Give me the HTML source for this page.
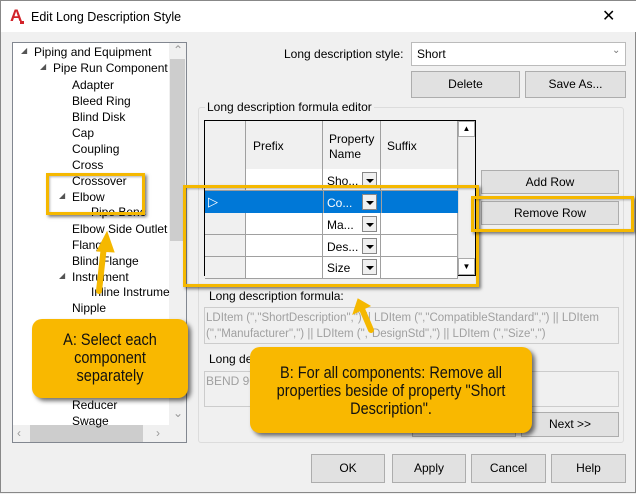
<!DOCTYPE html>
<html><head><style>
*{box-sizing:border-box;margin:0;padding:0}
body{width:636px;height:493px;background:#f0f0f0;font-family:"Liberation Sans",sans-serif;font-size:12px;color:#000;position:relative;overflow:hidden;border:1px solid #888}
.a{position:absolute}
.btn{position:absolute;background:#e1e1e1;border:1px solid #adadad;text-align:center;font-size:12px}
.t{position:absolute;white-space:nowrap;font-size:12px}
.cell{position:absolute;border-right:1px solid #a0a0a0;border-bottom:1px solid #a0a0a0;background:#fff}
.dd{position:absolute;width:15px;height:16px;border:1px solid #888;background:#f0f0f0}
.dd:after{content:"";position:absolute;left:3px;top:6px;border-left:4px solid transparent;border-right:4px solid transparent;border-top:4px solid #000}
.hl{position:absolute;border:3px solid #f5b800;box-shadow:2px 2px 3px rgba(0,0,0,.5), inset 1px 1px 2px rgba(0,0,0,.3)}
.call{position:absolute;background:#f9b800;border-radius:10px;box-shadow:3px 3px 4px rgba(0,0,0,.55);color:#111;font-size:16.5px;line-height:18px}
.call span{position:absolute;left:-60px;right:-60px;white-space:nowrap;text-align:center;transform:scaleX(0.88)}
</style></head><body>
<div class="a" style="left:0;top:0;width:636px;height:31px;background:#fff"></div>
<div class="t" style="left:9px;top:5px;font-size:17px;font-weight:bold;color:#d2232a">A</div>
<div class="a" style="left:19px;top:20px;width:4px;height:3px;background:#d2232a"></div>
<div class="t" style="left:30px;top:9px;font-size:12.5px">Edit Long Description Style</div>
<div class="t" style="left:601px;top:5px;font-size:16px;font-weight:300">✕</div>

<div class="a" style="left:11px;top:41px;width:175px;height:401px;background:#fff;border:1px solid #828790"></div>
<div class="a" style="left:168px;top:42px;width:17px;height:382px;background:#f0f0f0"></div>
<div class="a" style="left:169px;top:58px;width:15px;height:182px;background:#cdcdcd"></div>
<div class="t" style="left:172px;top:42px;color:#999">⌃</div>
<div class="t" style="left:172px;top:405px;color:#999">⌄</div>
<div class="a" style="left:12px;top:424px;width:173px;height:17px;background:#f0f0f0"></div>
<div class="a" style="left:29px;top:424px;width:113px;height:17px;background:#cdcdcd"></div>
<div class="t" style="left:16px;top:425px;color:#999">‹</div>
<div class="t" style="left:155px;top:425px;color:#999">›</div>
<div class="t" style="left:20px;top:45px;font-size:8px;color:#555">◢</div>
<div class="t" style="left:33px;top:44px">Piping and Equipment</div>
<div class="t" style="left:39px;top:61px;font-size:8px;color:#555">◢</div>
<div class="t" style="left:52px;top:60px">Pipe Run Component</div>
<div class="t" style="left:71px;top:76px;line-height:16px">Adapter<br>Bleed Ring<br>Blind Disk<br>Cap<br>Coupling<br>Cross<br>Crossover<br>Elbow</div>
<div class="t" style="left:58px;top:190px;font-size:8px;color:#555">◢</div>
<div class="t" style="left:90px;top:204px">Pipe Benc</div>
<div class="t" style="left:71px;top:220px;line-height:16px">Elbow Side Outlet<br>Flange<br>Blind Flange<br>Instrument</div>
<div class="t" style="left:58px;top:270px;font-size:8px;color:#555">◢</div>
<div class="t" style="left:90px;top:284px">Inline Instrume</div>
<div class="t" style="left:71px;top:300px">Nipple</div>
<div class="t" style="left:71px;top:396px;line-height:16px">Reducer<br>Swage</div>

<div class="t" style="left:283px;top:46px">Long description style:</div>
<div class="a" style="left:410px;top:41px;width:215px;height:24px;background:#fff;border:1px solid #bbb"></div>
<div class="t" style="left:416px;top:46px">Short</div>
<div class="t" style="left:611px;top:44px;font-size:10px;color:#777">⌄</div>
<div class="btn" style="left:410px;top:70px;width:109px;height:27px;line-height:25px">Delete</div>
<div class="btn" style="left:524px;top:70px;width:101px;height:27px;line-height:25px">Save As...</div>

<div class="a" style="left:197px;top:106px;width:426px;height:336px;border:1px solid #dcdcdc;border-radius:3px"></div>
<div class="t" style="left:204px;top:99px;background:#f0f0f0;padding:0 2px">Long description formula editor</div>

<div class="a" style="left:203px;top:119px;width:272px;height:156px;border:1px solid #000;background:#fff;overflow:hidden">
 <div class="cell" style="left:0;top:0;width:41px;height:49px;background:#f0f0f0"></div>
 <div class="cell" style="left:41px;top:0;width:77px;height:49px;background:#f0f0f0"></div>
 <div class="cell" style="left:118px;top:0;width:58px;height:49px;background:#f0f0f0"></div>
 <div class="cell" style="left:176px;top:0;width:77px;height:49px;background:#f0f0f0"></div>
 <div class="t" style="left:48px;top:18px">Prefix</div>
 <div class="t" style="left:124px;top:11px;line-height:15px">Property<br>Name</div>
 <div class="t" style="left:182px;top:18px">Suffix</div>
</div>
<div class="a" style="left:204px;top:168px;width:253px;height:106px">
 <div class="cell" style="left:0;top:0;width:41px;height:22px;background:#f0f0f0"></div><div class="cell" style="left:41px;top:0;width:77px;height:22px"></div><div class="cell" style="left:118px;top:0;width:58px;height:22px"></div><div class="cell" style="left:176px;top:0;width:77px;height:22px"></div>
 <div class="t" style="left:122px;top:5px">Sho...</div><div class="dd" style="left:157px;top:3px"></div>
 <div class="cell" style="left:0;top:22px;width:41px;height:22px;background:#0078d7;border-color:#0078d7"></div><div class="cell" style="left:41px;top:22px;width:212px;height:22px;background:#0078d7;border-color:#0078d7"></div>
 <div class="t" style="left:3px;top:25px;color:#fff;font-size:13px">▷</div>
 <div class="t" style="left:122px;top:27px;color:#fff">Co...</div><div class="dd" style="left:157px;top:25px"></div>
 <div class="a" style="left:118px;top:22px;width:1px;height:22px;background:#a0a0a0"></div><div class="a" style="left:176px;top:22px;width:1px;height:22px;background:#a0a0a0"></div>
 <div class="cell" style="left:0;top:44px;width:41px;height:22px;background:#f0f0f0"></div><div class="cell" style="left:41px;top:44px;width:77px;height:22px"></div><div class="cell" style="left:118px;top:44px;width:58px;height:22px"></div><div class="cell" style="left:176px;top:44px;width:77px;height:22px"></div>
 <div class="t" style="left:122px;top:49px">Ma...</div><div class="dd" style="left:157px;top:47px"></div>
 <div class="cell" style="left:0;top:66px;width:41px;height:22px;background:#f0f0f0"></div><div class="cell" style="left:41px;top:66px;width:77px;height:22px"></div><div class="cell" style="left:118px;top:66px;width:58px;height:22px"></div><div class="cell" style="left:176px;top:66px;width:77px;height:22px"></div>
 <div class="t" style="left:122px;top:71px">Des...</div><div class="dd" style="left:157px;top:69px"></div>
 <div class="cell" style="left:0;top:88px;width:41px;height:22px;background:#f0f0f0"></div><div class="cell" style="left:41px;top:88px;width:77px;height:22px"></div><div class="cell" style="left:118px;top:88px;width:58px;height:22px"></div><div class="cell" style="left:176px;top:88px;width:77px;height:22px"></div>
 <div class="t" style="left:122px;top:92px">Size</div><div class="dd" style="left:157px;top:90px"></div>
</div>
<div class="a" style="left:457px;top:120px;width:17px;height:154px;background:#f0f0f0;border-left:1px solid #ddd"></div>
<div class="a" style="left:457px;top:120px;width:17px;height:16px;background:#fff;border:1px solid #aaa;font-size:8px;text-align:center;line-height:14px">▲</div>
<div class="a" style="left:457px;top:257px;width:17px;height:17px;background:#fff;border:1px solid #aaa;font-size:8px;text-align:center;line-height:15px">▼</div>

<div class="btn" style="left:480px;top:169px;width:138px;height:24px;line-height:22px">Add Row</div>
<div class="btn" style="left:480px;top:200px;width:138px;height:24px;line-height:22px">Remove Row</div>

<div class="t" style="left:208px;top:288px">Long description formula:</div>
<div class="a" style="left:203px;top:306px;width:415px;height:37px;border:1px solid #ccc"></div>
<div class="t" style="left:205px;top:309px;color:#a0a0a0;line-height:16px;font-size:11.5px">LDItem (",&quot;ShortDescription",") || LDItem (",&quot;CompatibleStandard",") || LDItem<br>(",&quot;Manufacturer",") || LDItem (",&quot;DesignStd",") || LDItem (",&quot;Size",")</div>
<div class="t" style="left:208px;top:351px">Long description:</div>
<div class="a" style="left:203px;top:370px;width:415px;height:36px;border:1px solid #ccc"></div>
<div class="t" style="left:205px;top:373px;color:#a0a0a0">BEND 90</div>
<div class="btn" style="left:411px;top:411px;width:104px;height:25px"></div>
<div class="btn" style="left:520px;top:411px;width:98px;height:25px;line-height:23px">Next &gt;&gt;</div>

<div class="btn" style="left:310px;top:453px;width:74px;height:29px;line-height:27px">OK</div>
<div class="btn" style="left:391px;top:453px;width:74px;height:29px;line-height:27px">Apply</div>
<div class="btn" style="left:470px;top:453px;width:75px;height:29px;line-height:27px">Cancel</div>
<div class="btn" style="left:550px;top:453px;width:75px;height:29px;line-height:27px">Help</div>

<div class="hl" style="left:45px;top:172px;width:99px;height:42px"></div>
<div class="hl" style="left:182px;top:184px;width:296px;height:102px"></div>
<div class="hl" style="left:470px;top:195px;width:163px;height:36px"></div>

<svg class="a" style="left:0;top:0" width="636" height="493">
<g fill="#f5b800" stroke="#f5b800" stroke-linecap="round">
<line x1="98" y1="290" x2="103" y2="245" stroke-width="6"/>
<polygon points="96,250 106,231 113,251" stroke-width="1"/>
<line x1="370" y1="329" x2="361" y2="308" stroke-width="6"/>
<polygon points="352,313 357,298 369,305" stroke-width="1"/>
</g></svg>
<div class="call" style="left:31px;top:318px;width:156px;height:79px"><span style="top:12px">A: Select each<br>component<br>separately</span></div>
<div class="call" style="left:249px;top:346px;width:282px;height:86px"><span style="top:17px">B: For all components: Remove all<br>properties beside of property "Short<br>Description".</span></div>
</body></html>
